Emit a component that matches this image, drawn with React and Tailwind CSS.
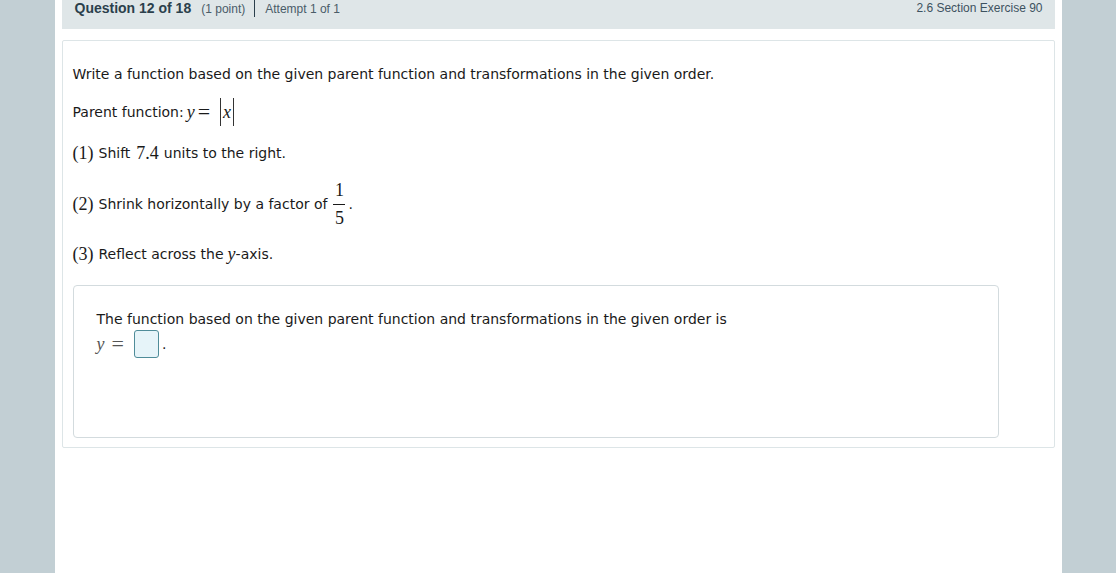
import React from "react";

const sans = { fontFamily: '"DejaVu Sans", Verdana, sans-serif' };
const serif = { fontFamily: '"Liberation Serif", "Times New Roman", serif' };
const arial = { fontFamily: '"Liberation Sans", Arial, sans-serif' };

function M({ children, italic }) {
  return (
    <span className={`text-[18px] ${italic ? "italic" : ""}`} style={serif}>
      {children}
    </span>
  );
}

// a MathJax-like equals sign, a bit wider than the font's own
function Eq({ className = "" }) {
  return (
    <span className={`text-[22px] leading-none ${className}`} style={serif}>=</span>
  );
}

export default function App() {
  return (
    <div className="min-h-[573px] h-[573px] bg-[#c2cfd4] overflow-hidden">
      <div className="mx-auto w-[1007px] h-full bg-white px-[7px]">
        {/* header */}
        <div className="h-[29px] bg-[#dfe6e8] flex items-start justify-between pl-[13px] pr-[12px] text-[#2b3f4c]" style={arial}>
          <div className="flex items-start">
            <span className="font-bold text-[14px] leading-[16px]">Question 12 of 18</span>
            <span className="text-[12px] leading-[16px] text-[#4a5c68] ml-[10px] pt-[1px]">(1 point)</span>
            <span className="w-px h-[17px] bg-[#2b3f4c] ml-[9px]" />
            <span className="text-[12px] leading-[16px] text-[#4a5c68] ml-[10px] pt-[1px]">Attempt 1 of 1</span>
          </div>
          <span className="text-[12px] leading-[16px] text-[#3d5260]">2.6 Section Exercise 90</span>
        </div>

        {/* card */}
        <div className="mt-[11px] h-[408px] border border-[#dde5e7] rounded-[2px] px-[10px] pt-[23px] text-[14px] text-[#1a1a1a]" style={sans}>
          <p className="leading-[20px]">
            Write a function based on the given parent function and transformations in the given order.
          </p>

          <p className="mt-[13px] h-[30px] flex items-center">
            <span>Parent function:</span>
            <span className="ml-[3px]"><M italic>y</M></span>
            <Eq className="ml-[3px]" />
            <span className="ml-[10px] inline-flex items-center">
              <span className="w-px h-[28px] bg-[#333]" />
              <span className="px-[2px]"><M italic>x</M></span>
              <span className="w-px h-[28px] bg-[#333]" />
            </span>
          </p>

          <p className="mt-[15px] h-[22px] flex items-center">
            <M>(1)</M>
            <span className="ml-[5px]">Shift</span>
            <span className="ml-[6px]"><M>7.4</M></span>
            <span className="ml-[5px]">units to the right.</span>
          </p>

          <p className="mt-[16px] h-[48px] flex items-center">
            <M>(2)</M>
            <span className="ml-[5px]">Shrink horizontally by a factor of</span>
            <span className="ml-[6px] inline-flex flex-col items-center" style={serif}>
              <span className="text-[18px] leading-[17px]">1</span>
              <span className="w-[12px] h-px bg-[#1a1a1a] my-[5px]" />
              <span className="text-[18px] leading-[17px]">5</span>
            </span>
            <span className="ml-[3px]">.</span>
          </p>

          <p className="mt-[15px] h-[22px] flex items-center">
            <M>(3)</M>
            <span className="ml-[5px]">Reflect across the</span>
            <span className="ml-[4px]"><M italic>y</M></span>
            <span>-axis.</span>
          </p>

          <div className="mt-[20px] w-[926px] h-[153px] border border-[#d3dbde] rounded-[4px] pl-[23px] pt-[23px]">
            <p className="leading-[20px]">
              The function based on the given parent function and transformations in the given order is
            </p>
            <div className="mt-[0px] flex items-center h-[30px] text-[#555]">
              <M italic>y</M>
              <Eq className="ml-[7px]" />
              <span className="ml-[10px] w-[25px] h-[28px] border border-[#4f8c99] bg-[#e6f4f9] rounded-[3px]" />
              <span className="ml-[3px] text-[#1a1a1a]">.</span>
            </div>
          </div>
        </div>
      </div>
    </div>
  );
}
